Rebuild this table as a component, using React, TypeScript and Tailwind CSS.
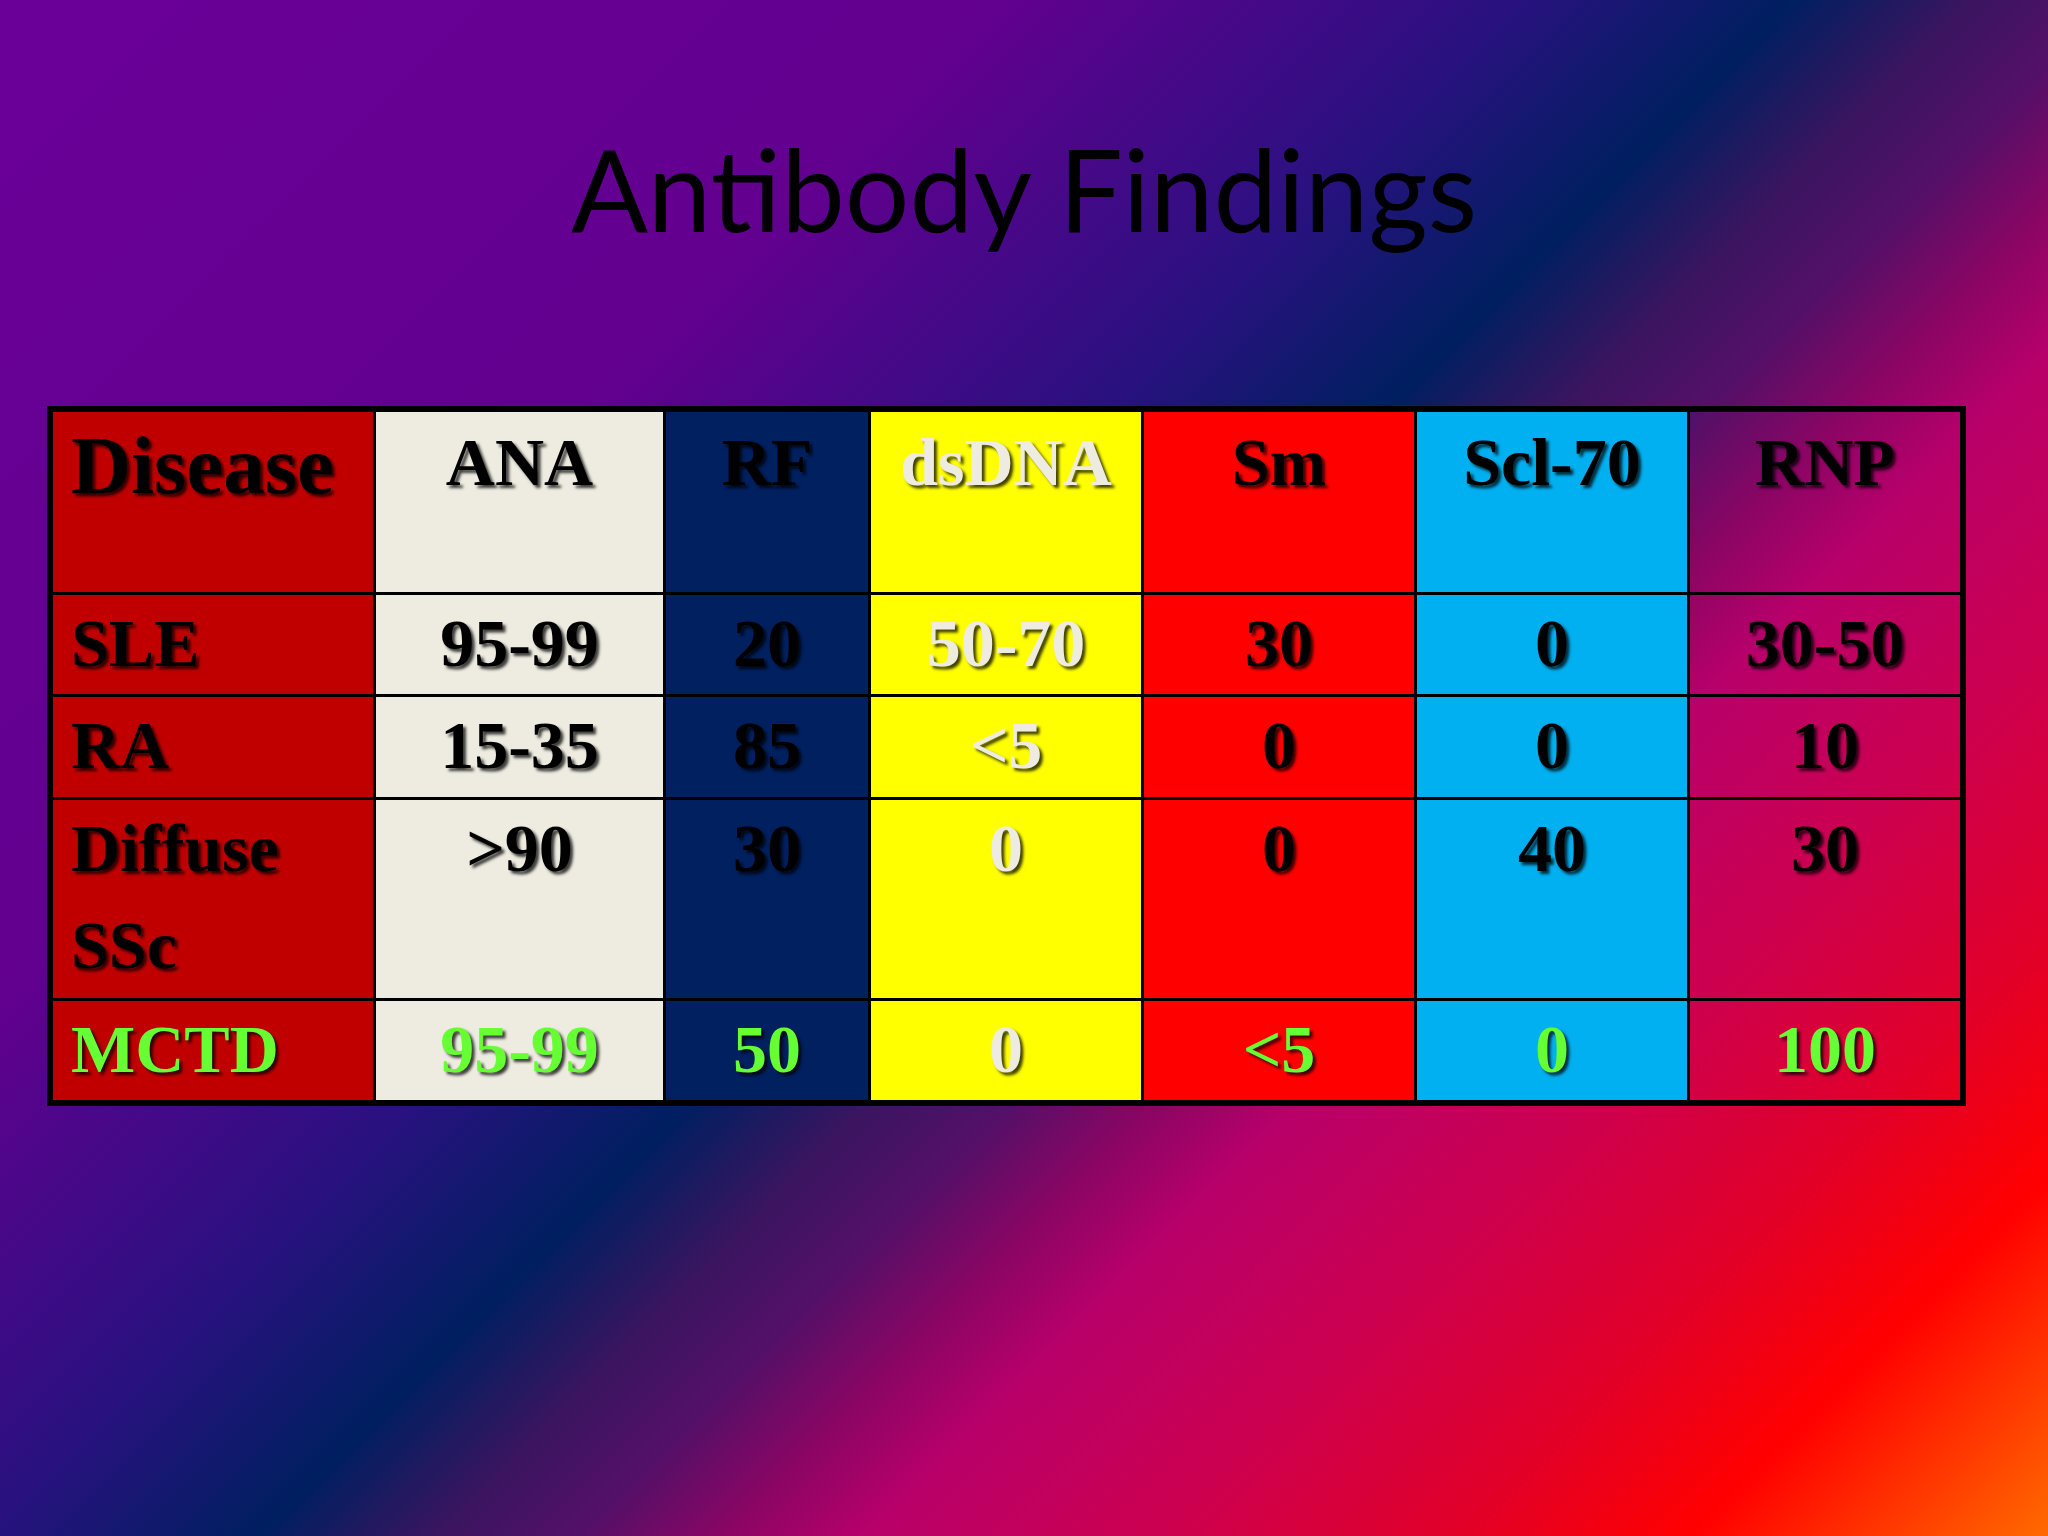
const columns = [
  { label: "Disease", bg: "bg-[#c00000]", text: "text-black" },
  { label: "ANA", bg: "bg-[#eeece1]", text: "text-black" },
  { label: "RF", bg: "bg-[#002060]", text: "text-black" },
  { label: "dsDNA", bg: "bg-[#ffff00]", text: "text-[#eeece1]" },
  { label: "Sm", bg: "bg-[#ff0000]", text: "text-black" },
  { label: "Scl-70", bg: "bg-[#00b0f0]", text: "text-black" },
  { label: "RNP", bg: "bg-transparent", text: "text-black" },
];

const rows = [
  { disease: ["SLE"], values: ["95-99", "20", "50-70", "30", "0", "30-50"], height: "h-[102px]", mctd: false },
  { disease: ["RA"], values: ["15-35", "85", "<5", "0", "0", "10"], height: "h-[103px]", mctd: false },
  { disease: ["Diffuse", "SSc"], values: [">90", "30", "0", "0", "40", "30"], height: "h-[201px]", mctd: false },
  { disease: ["MCTD"], values: ["95-99", "50", "0", "<5", "0", "100"], height: "h-[99px]", mctd: true },
];

const shadow = "[text-shadow:3px_3px_3px_rgba(0,0,0,0.75)]";

export default function App() {
  return (
    <div className="w-[2048px] h-[1536px] overflow-hidden bg-[linear-gradient(135deg,#6b0098_0%,#62008f_28%,#2a1180_42%,#001f60_50%,#3a1560_55%,#541068_59%,#8a0564_63%,#b8006a_67%,#cc0050_75%,#e0002a_83%,#ff0000_90%,#ff6a00_100%)]">
      {/* Title */}
      <h1 className="pt-[131px] text-center font-['Lato',sans-serif] text-[114px] leading-[114px] font-normal text-black">
        Antibody Findings
      </h1>

      {/* Table */}
      <div className="mt-[161px] ml-[47px] w-[1919px] border-[6px] border-black font-['Liberation_Serif','Times_New_Roman',serif] font-bold text-[68px] leading-[97px]">
        <div className="grid grid-cols-[323px_290px_205px_273px_273px_273px_270px]">
          {/* Header row */}
          {columns.map((col, i) => (
            <div
              key={col.label}
              className={`h-[183px] border-b-[3px] border-black ${i < 6 ? "border-r-[3px]" : ""} ${col.bg} ${col.text} ${shadow} ${
                i === 0 ? "pl-[18px] pt-[5px] text-[83px]" : "pt-[2px] text-center"
              }`}
            >
              {col.label}
            </div>
          ))}

          {/* Body rows */}
          {rows.map((row, r) =>
            columns.map((col, i) => {
              const last = r === rows.length - 1;
              const content = i === 0 ? row.disease : [row.values[i - 1]];
              const color = row.mctd && i !== 3 ? "text-[#66ff33]" : col.text;
              return (
                <div
                  key={`${r}-${i}`}
                  className={`${row.height} border-black ${last ? "" : "border-b-[3px]"} ${i < 6 ? "border-r-[3px]" : ""} ${col.bg} ${color} ${shadow} ${
                    i === 0 ? "pl-[18px]" : "text-center"
                  }`}
                >
                  {content.map((line) => (
                    <div key={line}>{line}</div>
                  ))}
                </div>
              );
            })
          )}
        </div>
      </div>
    </div>
  );
}
